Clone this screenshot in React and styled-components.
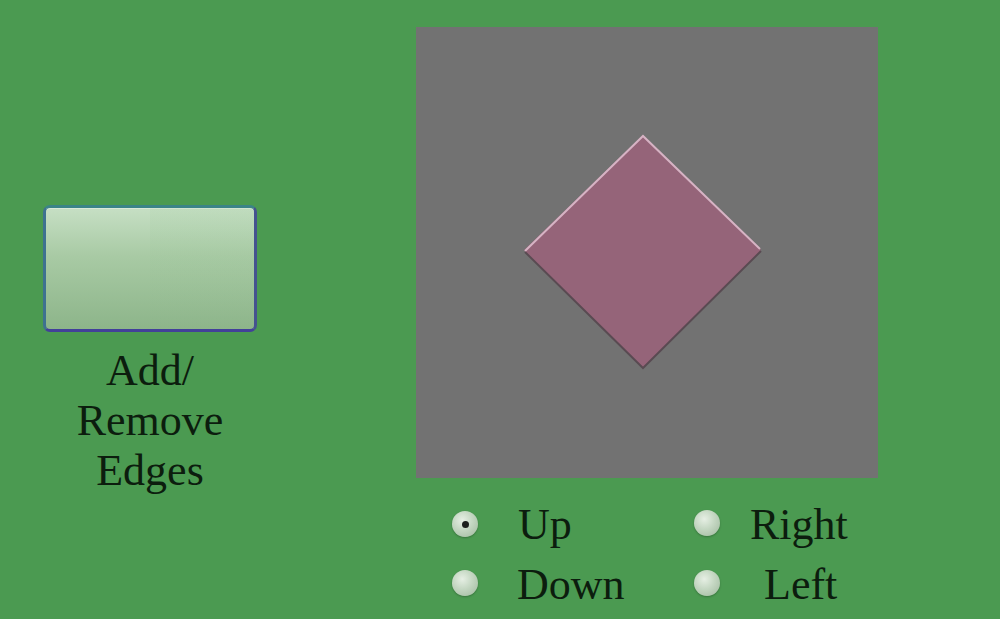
import React from "react";
import styled, { createGlobalStyle } from "styled-components";

const Global = createGlobalStyle`
  html, body { margin: 0; padding: 0; }
  body {
    width: 1000px;
    height: 619px;
    overflow: hidden;
    background: #4b9a51;
    font-family: "Liberation Serif", "Times New Roman", serif;
    color: #0c1d0e;
  }
`;

const Page = styled.div`
  display: flex;
  align-items: flex-start;
  width: 1000px;
  height: 619px;
  box-sizing: border-box;
  padding: 27px 0 0 43px;
  background: #4b9a51;
`;

const LeftColumn = styled.div`
  display: flex;
  flex-direction: column;
  align-items: center;
  width: 214px;
  margin-top: 178px;
`;

const ToggleButton = styled.button`
  position: relative;
  width: 214px;
  height: 127px;
  box-sizing: border-box;
  border-radius: 7px;
  border: 3px solid #45528f;
  border-top-color: #3b8488;
  border-left-color: #3e7290;
  border-bottom-color: #42409a;
  background: linear-gradient(180deg, #c6dfc4 0%, #a8caa4 40%, #8db58a 100%);
  box-shadow: inset 0 1px 0 rgba(255,255,255,0.35);
  padding: 0;
  cursor: pointer;
  overflow: hidden;
  &::after {
    content: "";
    position: absolute;
    top: 0;
    bottom: 0;
    left: 50%;
    width: 50%;
    background: linear-gradient(180deg, rgba(150,200,150,0.12), rgba(140,180,140,0.05));
  }
`;

const ButtonCaption = styled.div`
  margin-top: 14px;
  font-size: 44px;
  line-height: 50px;
  text-align: center;
`;

const RightColumn = styled.div`
  display: flex;
  flex-direction: column;
  margin-left: 159px;
`;

const Canvas = styled.div`
  width: 462px;
  height: 451px;
  background: #727272;
`;

const CanvasSvg = styled.svg`
  display: block;
  width: 100%;
  height: 100%;
`;

const RadioGrid = styled.div`
  display: grid;
  grid-template-columns: 242px 200px;
  grid-auto-rows: 60px;
  margin-top: 12px;
  padding-left: 36px;
`;

const RadioOption = styled.label`
  display: flex;
  align-items: flex-start;
  cursor: pointer;
`;

const RadioDot = styled.span`
  position: relative;
  flex: none;
  width: 26px;
  height: 26px;
  margin-top: ${(p) => p.$offset}px;
  border-radius: 50%;
  background: radial-gradient(circle at 40% 35%, #e6efe4 0%, #c3d6c1 45%, #9fb79d 100%);
  box-shadow: 0 1px 2px rgba(0,0,0,0.25);
  &::after {
    content: "";
    display: ${(p) => (p.$checked ? "block" : "none")};
    position: absolute;
    left: 50%;
    top: 50%;
    width: 7px;
    height: 7px;
    margin: -3.5px 0 0 -3.5px;
    border-radius: 50%;
    background: #1c1f1c;
  }
`;

const RadioLabel = styled.span`
  margin-left: ${(p) => p.$gap}px;
  padding-top: 5px;
  font-size: 44px;
  line-height: 60px;
`;

const options = [
  { label: "Up", checked: true, gap: 40, offset: 21 },
  { label: "Right", checked: false, gap: 30, offset: 20 },
  { label: "Down", checked: false, gap: 39, offset: 20 },
  { label: "Left", checked: false, gap: 44, offset: 20 },
];

export default function App() {
  return (
    <>
      <Global />
      <Page>
        <LeftColumn>
          <ToggleButton aria-label="Add/Remove Edges" />
          <ButtonCaption>
            Add/
            <br />
            Remove
            <br />
            Edges
          </ButtonCaption>
        </LeftColumn>
        <RightColumn>
          <Canvas>
            <CanvasSvg viewBox="0 0 462 451">
              <polygon points="227,108 345,223 227,340 108,223" fill="#956479" />
              <polyline points="109,224 227,109 344,222" fill="none" stroke="#d6b3c4" strokeWidth="2" />
              <polyline points="109,225 227,341 345,224" fill="none" stroke="#4e3a44" strokeWidth="2" strokeOpacity="0.7" />
            </CanvasSvg>
          </Canvas>
          <RadioGrid>
            {options.map((o) => (
              <RadioOption key={o.label}>
                <RadioDot $checked={o.checked} $offset={o.offset} />
                <RadioLabel $gap={o.gap}>{o.label}</RadioLabel>
              </RadioOption>
            ))}
          </RadioGrid>
        </RightColumn>
      </Page>
    </>
  );
}
